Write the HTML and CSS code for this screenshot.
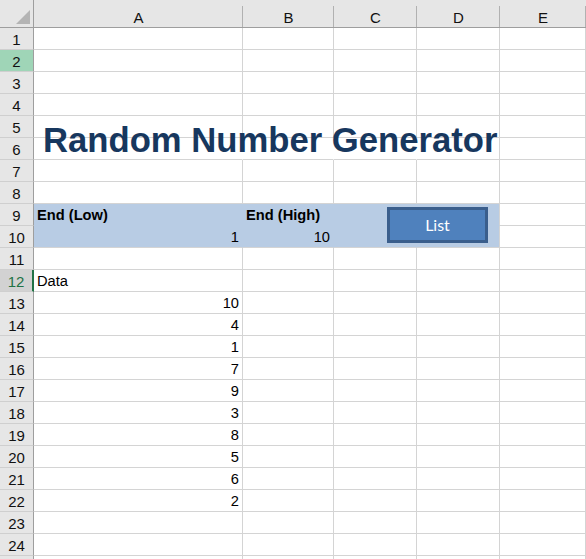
FILE: index.html
```html
<!DOCTYPE html>
<html lang="en">
<head>
<meta charset="utf-8">
<title>Random Number Generator</title>
<link rel="stylesheet" href="styles.css">
</head>
<body>
<div class="sheet-wrap">
  <div class="sheet">
    <div class="corner"><svg class="tri" width="14" height="14" viewBox="0 0 14 14"><polygon points="14,0 14,14 0,14" fill="#b4b4b4"/></svg></div>
    <div class="ch">A</div><div class="ch">B</div><div class="ch">C</div><div class="ch">D</div><div class="ch">E</div>

    <div class="rh">1</div><div class="c"></div><div class="c"></div><div class="c"></div><div class="c"></div><div class="c"></div>
    <div class="rh sel">2</div><div class="c"></div><div class="c"></div><div class="c"></div><div class="c"></div><div class="c"></div>
    <div class="rh">3</div><div class="c"></div><div class="c"></div><div class="c"></div><div class="c"></div><div class="c"></div>
    <div class="rh">4</div><div class="c"></div><div class="c"></div><div class="c"></div><div class="c"></div><div class="c"></div>
    <div class="rh">5</div><div class="c"></div><div class="c"></div><div class="c"></div><div class="c"></div><div class="c"></div>
    <div class="rh">6</div><div class="c title overflow"><span class="title-text">Random Number Generator</span></div><div class="c overflow"></div><div class="c overflow"></div><div class="c"></div><div class="c"></div>
    <div class="rh">7</div><div class="c"></div><div class="c"></div><div class="c"></div><div class="c"></div><div class="c"></div>
    <div class="rh">8</div><div class="c"></div><div class="c"></div><div class="c"></div><div class="c"></div><div class="c"></div>
    <div class="rh">9</div><div class="c band band-top bold">End (Low)</div><div class="c band band-top bold">End (High)</div><div class="c band band-top"></div><div class="c band band-top band-end"></div><div class="c"></div>
    <div class="rh">10</div><div class="c band num">1</div><div class="c band num">10</div><div class="c band"></div><div class="c band band-end"></div><div class="c"></div>
    <div class="rh">11</div><div class="c"></div><div class="c"></div><div class="c"></div><div class="c"></div><div class="c"></div>
    <div class="rh active">12</div><div class="c">Data</div><div class="c"></div><div class="c"></div><div class="c"></div><div class="c"></div>
    <div class="rh">13</div><div class="c num">10</div><div class="c"></div><div class="c"></div><div class="c"></div><div class="c"></div>
    <div class="rh">14</div><div class="c num">4</div><div class="c"></div><div class="c"></div><div class="c"></div><div class="c"></div>
    <div class="rh">15</div><div class="c num">1</div><div class="c"></div><div class="c"></div><div class="c"></div><div class="c"></div>
    <div class="rh">16</div><div class="c num">7</div><div class="c"></div><div class="c"></div><div class="c"></div><div class="c"></div>
    <div class="rh">17</div><div class="c num">9</div><div class="c"></div><div class="c"></div><div class="c"></div><div class="c"></div>
    <div class="rh">18</div><div class="c num">3</div><div class="c"></div><div class="c"></div><div class="c"></div><div class="c"></div>
    <div class="rh">19</div><div class="c num">8</div><div class="c"></div><div class="c"></div><div class="c"></div><div class="c"></div>
    <div class="rh">20</div><div class="c num">5</div><div class="c"></div><div class="c"></div><div class="c"></div><div class="c"></div>
    <div class="rh">21</div><div class="c num">6</div><div class="c"></div><div class="c"></div><div class="c"></div><div class="c"></div>
    <div class="rh">22</div><div class="c num">2</div><div class="c"></div><div class="c"></div><div class="c"></div><div class="c"></div>
    <div class="rh">23</div><div class="c"></div><div class="c"></div><div class="c"></div><div class="c"></div><div class="c"></div>
    <div class="rh">24</div><div class="c"></div><div class="c"></div><div class="c"></div><div class="c"></div><div class="c"></div>
    <div class="rh"></div><div class="c"></div><div class="c"></div><div class="c"></div><div class="c"></div><div class="c"></div>
  </div>
  <button class="list-btn" type="button">List</button>
</div>
</body>
</html>
```

FILE: styles.css
```css
html, body {
  margin: 0;
  padding: 0;
  background: #ffffff;
}

body {
  width: 586px;
  height: 559px;
  overflow: hidden;
  font-family: "Liberation Sans", Arial, sans-serif;
  color: #000000;
}

.sheet-wrap {
  position: relative;
}

.sheet {
  display: grid;
  grid-template-columns: 34px 209px 91px 83px 83px 86px;
  grid-template-rows: 28px;
  grid-auto-rows: 22px;
}

.sheet > div {
  box-sizing: border-box;
  min-width: 0;
  white-space: nowrap;
  display: flex;
  align-items: flex-end;
  line-height: 17px;
}

/* corner */
.corner {
  background: #e6e6e6;
  border-right: 1px solid #9e9e9e;
  border-bottom: 1px solid #9e9e9e;
  justify-content: flex-end;
  padding: 0 3px 3px 0;
}

.tri {
  display: block;
}

/* column headers */
.ch {
  background:
    linear-gradient(#b1b1b1, #b1b1b1) right 6px / 1px calc(100% - 6px) no-repeat,
    #e6e6e6;
  border-bottom: 1px solid #9e9e9e;
  justify-content: center;
  font-size: 15px;
  padding-bottom: 1px;
  color: #111111;
}

/* row headers */
.rh {
  background: #e6e6e6;
  border-right: 1px solid #9e9e9e;
  border-bottom: 1px solid #cfcfcf;
  justify-content: center;
  font-size: 15px;
  padding-bottom: 1px;
  color: #111111;
}

.rh.sel {
  background: #9fd5b7;
}

.rh.active {
  background: #d2d2d2;
  color: #217346;
  border-right: 2px solid #217346;
}

/* cells */
.c {
  border-right: 1px solid #d4d4d4;
  border-bottom: 1px solid #d4d4d4;
  font-size: 14.67px;
  padding: 0 3px 1px 3px;
}

.num {
  justify-content: flex-end;
}

.bold {
  font-weight: bold;
}

.overflow {
  border-right-color: transparent;
  overflow: visible;
}

.sheet > .title {
  display: block;
  padding: 0 0 0 9px;
}

.title-text {
  display: block;
  margin-top: -17px;
  font-size: 34.67px;
  font-weight: bold;
  color: #17375e;
  line-height: 38px;
}

/* filled band rows 9-10 */
.band {
  background: #b8cce4;
  border-right-color: #b8cce4;
}

.band-top {
  border-bottom-color: #b8cce4;
}

.band-end {
  border-right-color: #d4d4d4;
}

/* shape button */
.list-btn {
  position: absolute;
  left: 387px;
  top: 207px;
  width: 101px;
  height: 36px;
  box-sizing: border-box;
  margin: 0;
  padding: 0;
  background: #4f81bd;
  border: 3px solid #3a5e8c;
  color: #ffffff;
  font-family: Lato, "Open Sans", sans-serif;
  font-size: 16px;
  line-height: 28px;
  text-align: center;
}
```
